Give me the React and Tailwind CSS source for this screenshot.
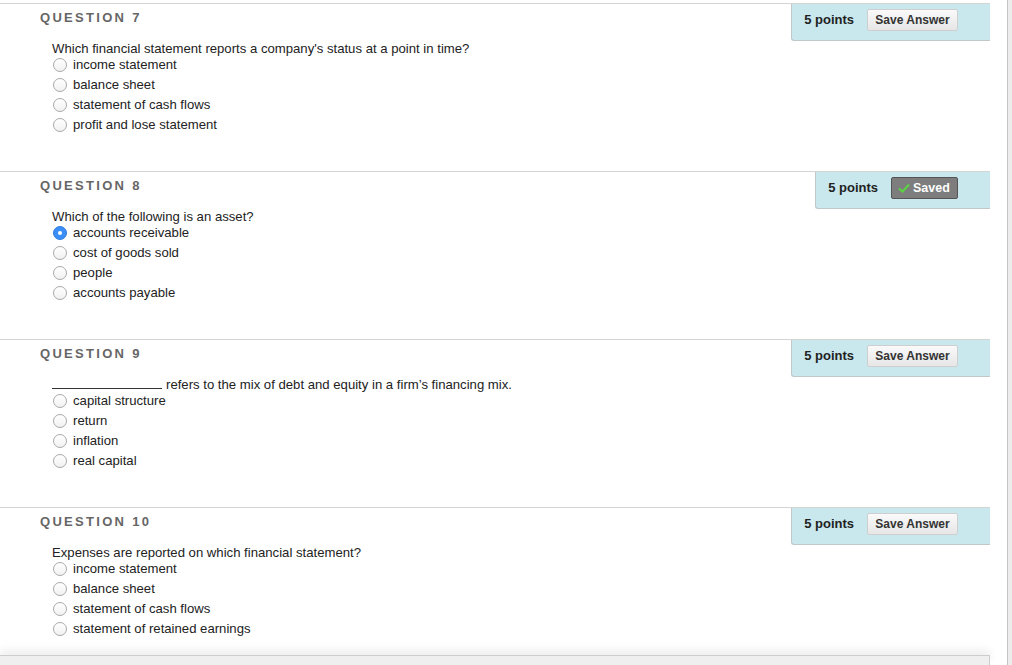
import React from "react";

const questions = [
  {
    num: 7,
    text: "Which financial statement reports a company's status at a point in time?",
    options: ["income statement", "balance sheet", "statement of cash flows", "profit and lose statement"],
    saved: false,
  },
  {
    num: 8,
    text: "Which of the following is an asset?",
    options: ["accounts receivable", "cost of goods sold", "people", "accounts payable"],
    checked: 0,
    saved: true,
  },
  {
    num: 9,
    blank: true,
    text: "refers to the mix of debt and equity in a firm\u2019s financing mix.",
    options: ["capital structure", "return", "inflation", "real capital"],
    saved: false,
  },
  {
    num: 10,
    text: "Expenses are reported on which financial statement?",
    options: ["income statement", "balance sheet", "statement of cash flows", "statement of retained earnings"],
    saved: false,
    last: true,
  },
];

const Radio = ({ checked }) =>
  checked ? (
    <span className="w-[14px] h-[14px] rounded-full bg-[#3a8ef5] border border-[#2f7ee0] flex items-center justify-center shrink-0">
      <span className="w-[4px] h-[4px] rounded-full bg-white" />
    </span>
  ) : (
    <span className="w-[14px] h-[14px] rounded-full border border-[#a9a9a9] bg-gradient-to-b from-white to-[#f1f1f1] shrink-0" />
  );

const Question = ({ q }) => (
  <div className={`${q.last ? "h-[148px]" : "h-[168px]"} shrink-0 border-t border-[#d4d4d4]`}>
    <div className="flex justify-between items-start h-[36px]">
      <div className="pl-[40px] pt-[6px] text-[13px] leading-[16px] font-bold tracking-[2.3px] text-[#666666]">
        QUESTION {q.num}
      </div>
      <div className="h-[37px] flex items-start pt-[5px] pl-[12px] pr-[32px] bg-[#c9e8ee] border-b border-l border-[#c2c7c9] rounded-bl-[3px]">
        <span className="text-[13px] font-bold text-[#222] leading-[22px] mr-[13px]">5 points</span>
        {q.saved ? (
          <span className="h-[22px] w-[67px] pl-[6px] flex items-center gap-[3px] bg-[#7d7d7d] border border-[#555] rounded-[2px] text-white text-[12.5px] font-bold">
            <svg width="12" height="10" viewBox="0 0 12 10">
              <path d="M1 5.5 L4.5 8.5 L11 1.5" fill="none" stroke="#5bd442" strokeWidth="2" />
            </svg>
            Saved
          </span>
        ) : (
          <span className="h-[22px] w-[91px] flex items-center justify-center bg-gradient-to-b from-[#fafafa] to-[#e6e6e6] border border-[#cfcfcf] rounded-[2px] text-[#333] text-[12px] font-bold">
            Save Answer
          </span>
        )}
      </div>
    </div>
    <div className="pl-[52px] text-[13.15px] text-[#222]">
      <div className="h-[17px] leading-[17px] flex items-end">
        {q.blank && (
          <span className="inline-block w-[110px] border-b border-[#333] mr-[4px] mb-[4px]" />
        )}
        <span>{q.text}</span>
      </div>
      <div className="flex flex-col gap-[4px]">
        {q.options.map((o, i) => (
          <div key={o} className="flex items-center h-[16px] gap-[6px] pl-[1px]">
            <Radio checked={q.checked === i} />
            <span className="leading-[16px]">{o}</span>
          </div>
        ))}
      </div>
    </div>
  </div>
);

export default function App() {
  return (
    <div className="w-[1012px] h-[665px] flex bg-white overflow-hidden" style={{ fontFamily: '"Liberation Sans", Arial, sans-serif' }}>
      <div className="w-[990px] pt-[3px] flex flex-col">
        {questions.map((q) => (
          <Question key={q.num} q={q} />
        ))}
        <div className="flex-1 bg-[#efefef] border-t border-r border-[#cccccc] shadow-[0_-5px_8px_rgba(0,0,0,0.07)]" />
      </div>
      <div className="w-[17px]" />
      <div className="w-[5px] border-l border-[#c4c4c4] bg-[#ececec]" />
    </div>
  );
}
